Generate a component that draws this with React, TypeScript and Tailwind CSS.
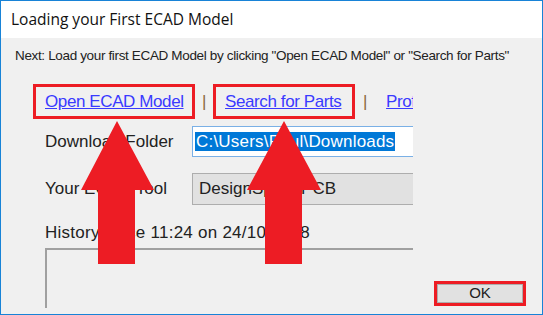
import React from "react";

export default function App() {
  return (
    <div className="relative w-[543px] h-[315px] overflow-hidden border border-[#1883d7] bg-[#f0f0f0] font-['Liberation_Sans',Arial,sans-serif] text-black">
      <div className="h-[37px] bg-white flex items-center pl-[10px] text-[15.5px] font-['Open_Sans','Noto_Sans',sans-serif] text-[#111]">
        Loading your First ECAD Model
      </div>
      <div className="h-[36px] flex items-center pl-[14px] text-[13.5px] tracking-[-0.35px] text-[#222]">
        Next: Load your first ECAD Model by clicking "Open ECAD Model" or "Search for Parts"
      </div>
      <div className="flex h-[239px]">
        <div className="w-[412px] overflow-hidden pl-[32px] pt-[10px] flex flex-col">
          <div className="flex items-center h-[35px] whitespace-nowrap text-[17px] tracking-[-0.4px]">
            <div className="w-[162px] h-[35px] shrink-0 border-[3px] border-[#ed1c24] flex items-center pl-[9px]">
              <span className="text-[#3a3aff] underline">Open ECAD Model</span>
            </div>
            <span className="mx-[7px] text-[#8a6a40]">|</span>
            <div className="w-[142px] h-[35px] shrink-0 border-[3px] border-[#ed1c24] flex items-center pl-[9px]">
              <span className="text-[#3a3aff] underline">Search for Parts</span>
            </div>
            <span className="ml-[8px] text-[#8a6a40]">|</span>
            <span className="ml-[19px] text-[#3a3aff] underline">Profile</span>
          </div>
          <div className="flex items-center mt-[7px] h-[31px] pl-[12px] whitespace-nowrap text-[17px] tracking-[0px] text-[#222]">
            <span className="w-[147px] shrink-0">Download Folder</span>
            <div className="h-[31px] w-[260px] shrink-0 border border-[#7ab0e6] bg-white flex items-center pl-[2px]">
              <span className="bg-[#0078d7] text-white px-[1px] leading-[19px] tracking-[0.2px]">C:\Users\Paul\Downloads</span>
            </div>
          </div>
          <div className="flex items-center mt-[16px] h-[32px] pl-[12px] whitespace-nowrap text-[17px] tracking-[0px] text-[#222]">
            <span className="w-[147px] shrink-0">Your ECAD Tool</span>
            <div className="h-[32px] w-[260px] shrink-0 border border-[#adadad] bg-[#e1e1e1] flex items-center pl-[6px]">
              DesignSpark PCB
            </div>
          </div>
          <div className="mt-[18px] pl-[12px] h-[20px] flex items-center whitespace-nowrap text-[17px] tracking-[0.25px] text-[#222]">
            History since 11:24 on 24/10/2018
          </div>
          <div className="ml-[12px] mt-[5px] h-[60px] w-[400px] border-t-2 border-l-2 border-[#a0a0a0] bg-[#f0f0f0]" />
        </div>
        <div className="flex-1 flex flex-col justify-end pb-[7px] pl-[21px]">
          <div className="w-[92px] h-[25px] border-[3px] border-[#ed1c24] flex">
            <div className="flex-1 bg-[#e1e1e1] border border-[#adadad] flex items-center justify-center text-[15px] text-[#222]">
              OK
            </div>
          </div>
        </div>
      </div>
      <svg className="absolute left-0 top-0 pointer-events-none" width="543" height="315" viewBox="0 0 543 315">
        <polygon points="116,120 80,189 97,189 97,263 134,263 134,189 153,189" fill="#ed1c24" />
        <polygon points="283,120 246,189 264,189 264,263 301,263 301,189 320,189" fill="#ed1c24" />
      </svg>
    </div>
  );
}
